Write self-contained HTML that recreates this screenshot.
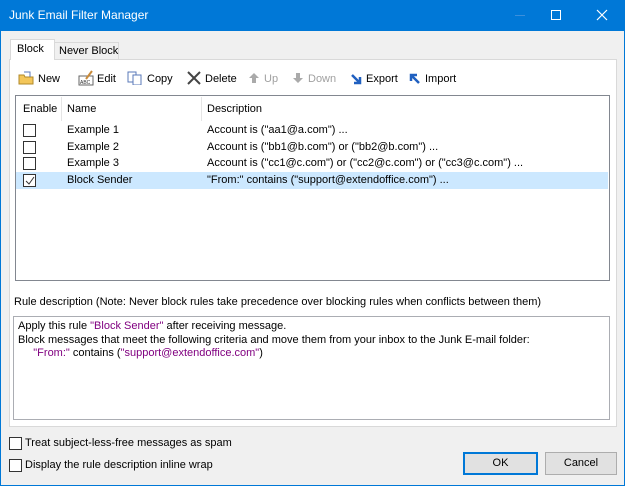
<!DOCTYPE html>
<html><head><style>
*{box-sizing:border-box;margin:0;padding:0}
body{width:625px;height:486px;font-family:"Liberation Sans",sans-serif;font-size:11px;color:#000;background:#f0f0f0;position:relative;overflow:hidden}
.a{position:absolute;white-space:nowrap}
.win{left:0;top:0;width:625px;height:486px;border:1px solid #0078d7;border-top:none}
.title{left:0;top:0;width:625px;height:31px;background:#0078d7;color:#fff;font-size:12px;line-height:31px;padding-left:9px}
.cb{width:13px;height:13px;border:1px solid #333;background:#fff}
.row{left:16px;width:592px;height:17px;line-height:17px}
.pu{color:#800080}
.btn{height:23px;line-height:21px;text-align:center;border:1px solid #adadad;background:#e1e1e1}
</style></head><body>
<div class="a win"></div>
<div class="a title">Junk Email Filter Manager</div>
<div class="a" style="left:515px;top:15px;width:10px;height:1px;background:#3b8fdc"></div>
<div class="a" style="left:551px;top:10px;width:10px;height:10px;border:1px solid #fff"></div>
<svg class="a" style="left:596px;top:9px" width="12" height="12"><path d="M1 1L11 11M11 1L1 11" stroke="#fff" stroke-width="1.2"/></svg>

<div class="a" style="left:9px;top:59px;width:608px;height:368px;background:#fff;border:1px solid #d9d9d9"></div>
<div class="a" style="left:54px;top:42px;width:65px;height:18px;border:1px solid #d9d9d9;background:#f0f0f0;line-height:16px;padding-left:4px">Never Block</div>
<div class="a" style="left:10px;top:39px;width:45px;height:21px;background:#fff;border:1px solid #d9d9d9;border-bottom:none;line-height:19px;padding-left:6px">Block</div>

<svg class="a" style="left:18px;top:71px" width="16" height="14"><path d="M1 4h5l1 2h8v7H1z" fill="#f3c65a" stroke="#b08a2a"/><path d="M6 1l6 0 0 5" stroke="#5a78b8" fill="none"/></svg>
<div class="a" style="left:38px;top:73px">New</div>
<svg class="a" style="left:78px;top:70px" width="16" height="16"><rect x="1" y="6" width="14" height="9" fill="#fff" stroke="#666"/><path d="M8 9L14 1" stroke="#c98a3a" stroke-width="2"/><text x="2" y="14" font-size="5" fill="#333">ABC</text></svg>
<div class="a" style="left:97px;top:73px">Edit</div>
<svg class="a" style="left:127px;top:71px" width="16" height="14"><rect x="1" y="1" width="8" height="10" fill="#fff" stroke="#5a78b8"/><rect x="6" y="4" width="8" height="10" fill="#fff" stroke="#5a78b8"/></svg>
<div class="a" style="left:147px;top:73px">Copy</div>
<svg class="a" style="left:187px;top:71px" width="14" height="14"><path d="M1 1L13 13M13 1L1 13" stroke="#444" stroke-width="2"/></svg>
<div class="a" style="left:205px;top:73px">Delete</div>
<svg class="a" style="left:249px;top:72px" width="10" height="12"><path d="M5 1L10 6H7v5H3V6H0z" fill="#aaa"/></svg>
<div class="a" style="left:264px;top:73px;color:#a0a0a0">Up</div>
<svg class="a" style="left:293px;top:72px" width="10" height="12"><path d="M5 11L10 6H7V1H3v5H0z" fill="#aaa"/></svg>
<div class="a" style="left:308px;top:73px;color:#a0a0a0">Down</div>
<svg class="a" style="left:350px;top:73px" width="12" height="12"><path d="M2 2L9 9M4 10h6V4" stroke="#2060c0" stroke-width="2.5" fill="none"/></svg>
<div class="a" style="left:366px;top:73px">Export</div>
<svg class="a" style="left:409px;top:73px" width="12" height="12"><path d="M10 10L3 3M2 8V2h6" stroke="#2060c0" stroke-width="2.5" fill="none"/></svg>
<div class="a" style="left:425px;top:73px">Import</div>

<div class="a" style="left:15px;top:95px;width:595px;height:186px;border:1px solid #828790;background:#fff"></div>
<div class="a" style="left:61px;top:97px;width:1px;height:24px;background:#e5e5e5"></div>
<div class="a" style="left:201px;top:97px;width:1px;height:24px;background:#e5e5e5"></div>
<div class="a" style="left:23px;top:103px">Enable</div>
<div class="a" style="left:67px;top:103px">Name</div>
<div class="a" style="left:207px;top:103px">Description</div>

<div class="a row" style="top:122px"><div class="a cb" style="left:7px;top:2px"></div><span class="a" style="left:51px">Example 1</span><span class="a" style="left:191px">Account is ("aa1@a.com") ...</span></div>
<div class="a row" style="top:139px"><div class="a cb" style="left:7px;top:2px"></div><span class="a" style="left:51px">Example 2</span><span class="a" style="left:191px">Account is ("bb1@b.com") or ("bb2@b.com") ...</span></div>
<div class="a row" style="top:155px"><div class="a cb" style="left:7px;top:2px"></div><span class="a" style="left:51px">Example 3</span><span class="a" style="left:191px">Account is ("cc1@c.com") or ("cc2@c.com") or ("cc3@c.com") ...</span></div>
<div class="a row" style="top:172px;background:#cce8ff"><div class="a cb" style="left:7px;top:2px"><svg class="a" style="left:1px;top:1px" width="10" height="10"><path d="M1 5L4 8L9 1" stroke="#333" fill="none"/></svg></div><span class="a" style="left:51px">Block Sender</span><span class="a" style="left:191px">"From:" contains ("support@extendoffice.com") ...</span></div>

<div class="a" style="left:14px;top:296px">Rule description (Note: Never block rules take precedence over blocking rules when conflicts between them)</div>
<div class="a" style="left:13px;top:316px;width:597px;height:104px;border:1px solid #abadb3;background:#fff;padding:3px 0 0 4px;line-height:13.5px">
Apply this rule <span class="pu">"Block Sender"</span> after receiving message.<br>
Block messages that meet the following criteria and move them from your inbox to the Junk E-mail folder:<br>
&nbsp;&nbsp;&nbsp;&nbsp;&nbsp;<span class="pu">"From:"</span> contains (<span class="pu">"support@extendoffice.com"</span>)
</div>

<div class="a cb" style="left:9px;top:437px"></div>
<div class="a" style="left:25px;top:437px">Treat subject-less-free messages as spam</div>
<div class="a cb" style="left:9px;top:459px"></div>
<div class="a" style="left:25px;top:459px">Display the rule description inline wrap</div>
<div class="a btn" style="left:463px;top:452px;width:75px;border:2px solid #0078d7;line-height:19px">OK</div>
<div class="a btn" style="left:545px;top:452px;width:72px">Cancel</div>
</body></html>
